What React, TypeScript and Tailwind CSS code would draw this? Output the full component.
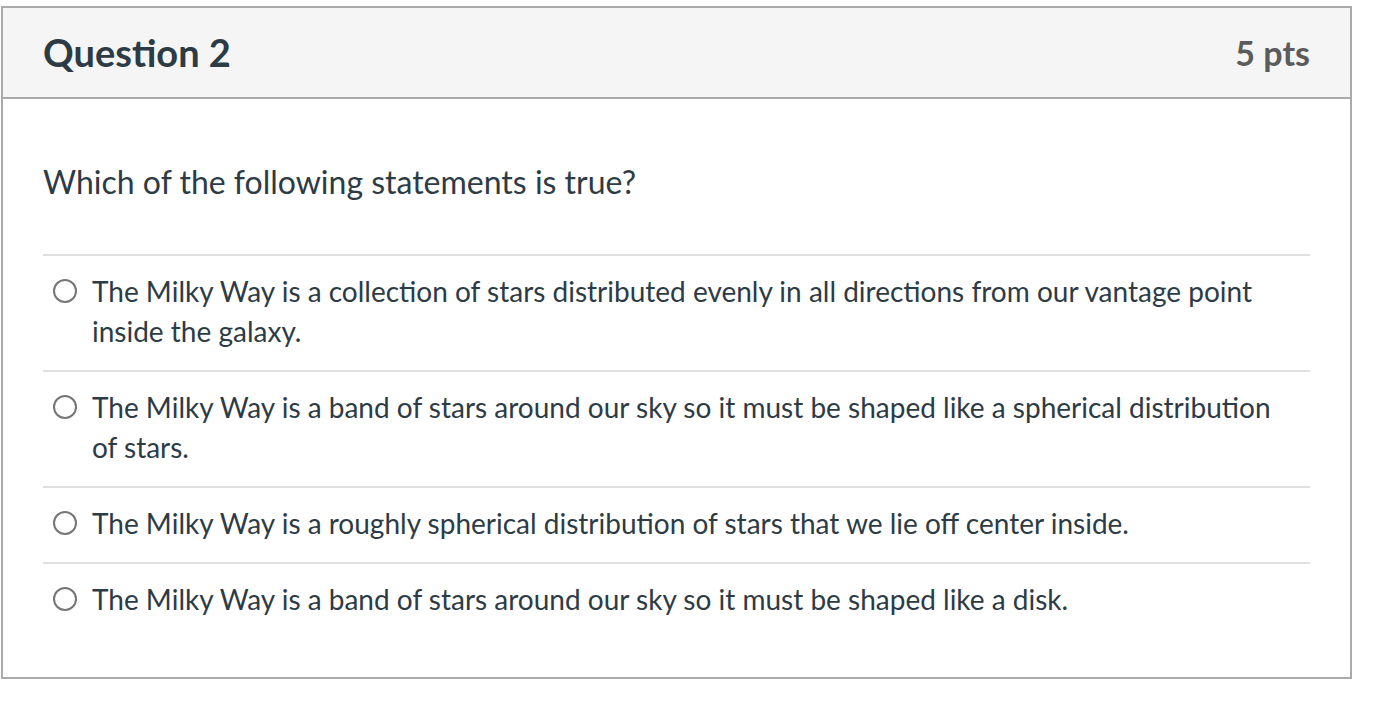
import React from 'react';

const answers = [
  'The Milky Way is a collection of stars distributed evenly in all directions from our vantage point inside the galaxy.',
  'The Milky Way is a band of stars around our sky so it must be shaped like a spherical distribution of stars.',
  'The Milky Way is a roughly spherical distribution of stars that we lie off center inside.',
  'The Milky Way is a band of stars around our sky so it must be shaped like a disk.',
];

const App: React.FC = () => {
  const [selected, setSelected] = React.useState<number | null>(null);

  return (
    <div className="min-h-screen bg-white pt-[6px] pl-[1px] font-['Lato','Liberation_Sans',sans-serif] text-[#2d3b45]">
      <div className="w-[1351px] border-2 border-[#aaaaaa]">
        <div className="flex h-[91px] items-center justify-between border-b-2 border-[#aaaaaa] bg-[#f5f5f5] px-[40px]">
          <h2 className="text-[38px] font-bold">Question 2</h2>
          <div className="text-[34px] font-bold text-[#5b5b5b]">5 pts</div>
        </div>

        <div className="px-[40px] pt-[63px] pb-[58px]">
          <p className="text-[32px] leading-[40px]">Which of the following statements is true?</p>

          <div className="mt-[52px]">
            {answers.map((text, i) => (
              <label
                key={i}
                className="flex cursor-pointer items-start border-t-2 border-[#e0e0e0] pt-[15px] pb-[19px] last:pb-0"
                onClick={() => setSelected(i)}
              >
                <span className="mt-[8px] ml-[10px] mr-[15px] flex h-[24px] w-[24px] shrink-0 items-center justify-center rounded-full border-2 border-[#767676]">
                  {selected === i && <span className="h-[12px] w-[12px] rounded-full bg-[#2d3b45]" />}
                </span>
                <span className="pr-[24px] text-[28px] leading-[40px]">{text}</span>
              </label>
            ))}
          </div>
        </div>
      </div>
    </div>
  );
};

export default App;
